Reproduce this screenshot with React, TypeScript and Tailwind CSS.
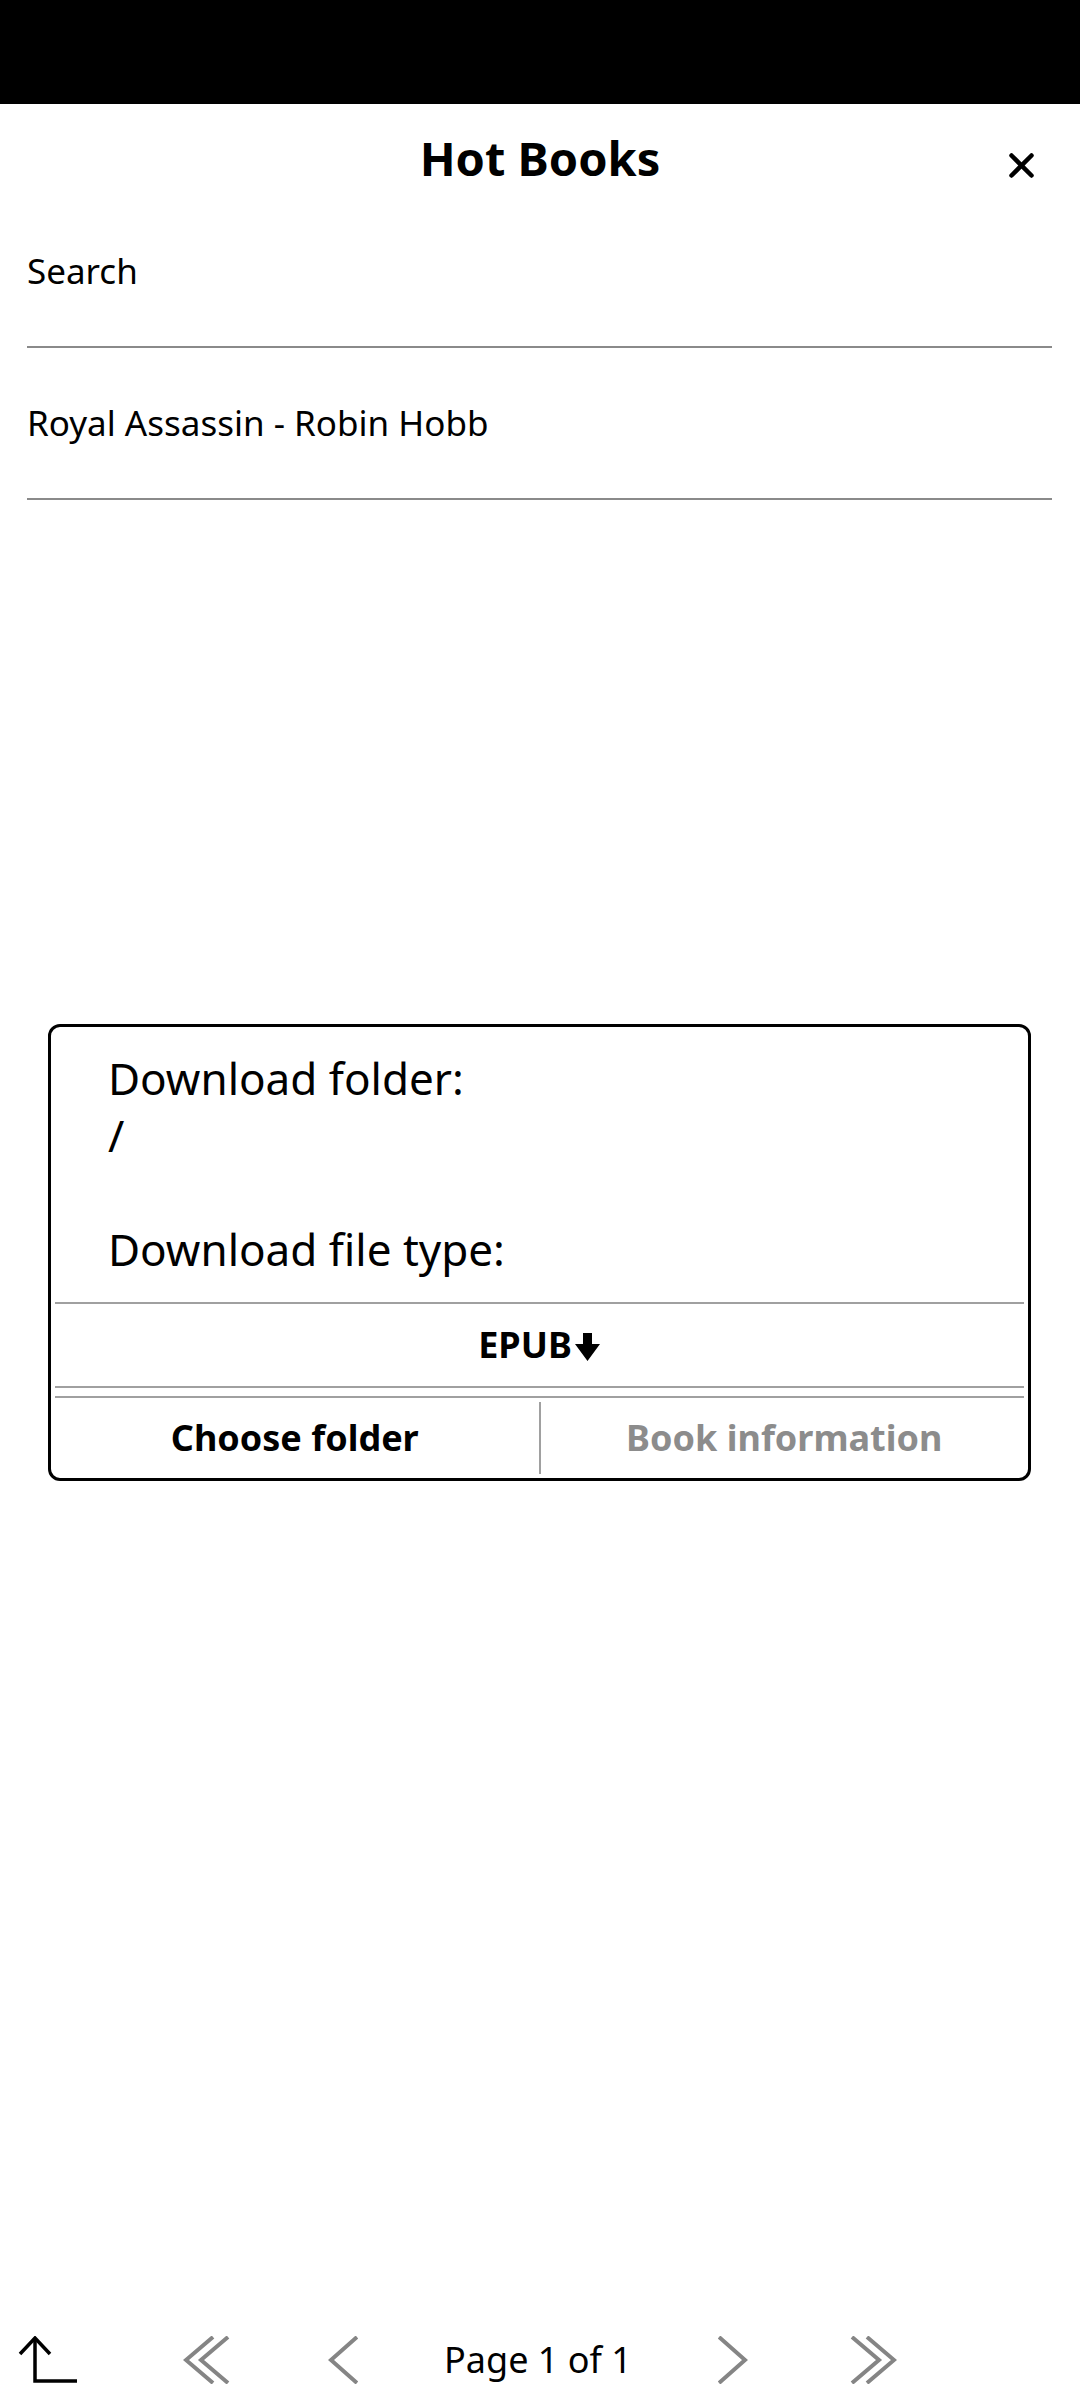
import React from 'react';

const font = { fontFamily: '"Noto Sans", "Open Sans", sans-serif' };

const DoubleChevron = ({ flip }: { flip?: boolean }) => (
  <svg width="47" height="48" viewBox="0 0 47 48" fill="none" stroke="#858585" strokeWidth="4" className={flip ? 'scale-x-[-1]' : ''}>
    <polyline points="30,1 3,24 30,47" />
    <polyline points="45,1 18,24 45,47" />
  </svg>
);

const Chevron = ({ flip }: { flip?: boolean }) => (
  <svg width="30" height="48" viewBox="0 0 30 48" fill="none" stroke="#858585" strokeWidth="4" className={flip ? 'scale-x-[-1]' : ''}>
    <polyline points="29,1 3,24 29,47" />
  </svg>
);

export default function App() {
  return (
    <div className="relative flex h-[2400px] w-[1080px] flex-col bg-white text-black" style={font}>
      {/* status bar */}
      <div className="h-[104px] w-full bg-black" />

      {/* header */}
      <div className="grid h-[92px] grid-cols-[1fr_auto_1fr] items-start pt-[22px]">
        <div />
        <h1 className="text-[47px] font-bold leading-[64px]">Hot Books</h1>
        <div className="flex justify-end pr-[46px] pt-[27px]">
          <svg width="25" height="25" viewBox="0 0 25 25" stroke="black" strokeWidth="4.5" strokeLinecap="round">
            <line x1="2.5" y1="2.5" x2="22.5" y2="22.5" />
            <line x1="22.5" y1="2.5" x2="2.5" y2="22.5" />
          </svg>
        </div>
      </div>

      {/* list */}
      <div className="ml-[27px] mr-[28px] flex flex-col">
        <div className="flex h-[152px] items-center border-b-2 border-[#8a8a8a] text-[35px]">Search</div>
        <div className="flex h-[152px] items-center border-b-2 border-[#8a8a8a] text-[35px]">Royal Assassin - Robin Hobb</div>
      </div>

      {/* dialog */}
      <div className="absolute left-[48px] top-[1024px] flex w-[983px] flex-col rounded-[12px] border-[3px] border-black bg-white">
        <div className="pl-[57px] pt-[23px] pb-[24px] text-[44px] leading-[57px]">
          <div>Download folder:</div>
          <div>/</div>
          <div>&nbsp;</div>
          <div>Download file type:</div>
        </div>
        <div className="mx-[4px] h-[2px] bg-[#a0a0a0]" />
        <div className="flex h-[82px] items-center justify-center text-[36px] font-bold">
          <span>EPUB</span>
          <svg width="27" height="28" viewBox="0 0 27 28" className="ml-[2px] mt-[3px]">
            <polygon points="9,0 18,0 18,11 26,11 13.5,28 1,11 9,11" fill="black" />
          </svg>
        </div>
        <div className="mx-[4px] h-[2px] bg-[#a0a0a0]" />
        <div className="mx-[4px] mt-[8px] h-[2px] bg-[#a0a0a0]" />
        <div className="flex h-[80px] items-stretch text-[36px] font-bold">
          <div className="flex flex-1 items-center justify-center">Choose folder</div>
          <div className="my-[4px] w-[2px] bg-[#a0a0a0]" />
          <div className="flex flex-1 items-center justify-center text-[#8c8c8c]">Book information</div>
        </div>
      </div>

      {/* bottom bar */}
      <div className="mt-auto flex h-[80px] items-center">
        <div className="ml-[17px] flex w-[62px]">
          <svg width="62" height="48" viewBox="0 0 62 48" fill="none" stroke="black" strokeWidth="3.5">
            <polyline points="18,2 18,45 60,45" />
            <polyline points="3,18 18,2 33,18" />
          </svg>
        </div>
        <div className="ml-[104px] flex w-[47px]">
          <DoubleChevron />
        </div>
        <div className="ml-[98px] flex w-[30px]">
          <Chevron />
        </div>
        <div className="flex w-[360px] justify-center text-[36px]">Page 1 of 1</div>
        <div className="flex w-[30px]">
          <Chevron flip />
        </div>
        <div className="ml-[102px] flex w-[47px]">
          <DoubleChevron flip />
        </div>
      </div>
    </div>
  );
}
